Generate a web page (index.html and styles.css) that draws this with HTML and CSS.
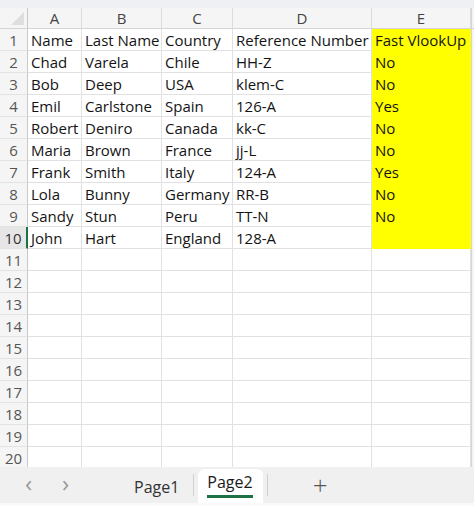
FILE: index.html
```html
<!DOCTYPE html>
<html lang="en">
<head>
    <meta charset="UTF-8">
    <meta name="viewport" content="width=device-width, initial-scale=1.0">
    <title>Fast VlookUp - Page2</title>
    <link rel="stylesheet" href="styles.css">
</head>
<body>
    <div class="app">
        <div class="top-strip"></div>

        <div class="sheet">
            <div class="grid">
                <div class="corner"><span class="corner-mark"></span></div>
                <div class="col-head">A</div>
                <div class="col-head">B</div>
                <div class="col-head">C</div>
                <div class="col-head">D</div>
                <div class="col-head">E</div>
                <div class="col-gap head"></div>

                <div class="row-head">1</div>
                <div class="cell">Name</div>
                <div class="cell">Last Name</div>
                <div class="cell">Country</div>
                <div class="cell">Reference Number</div>
                <div class="cell fill">Fast VlookUp</div>
                <div class="col-gap"></div>

                <div class="row-head">2</div>
                <div class="cell">Chad</div>
                <div class="cell">Varela</div>
                <div class="cell">Chile</div>
                <div class="cell">HH-Z</div>
                <div class="cell fill">No</div>
                <div class="col-gap"></div>

                <div class="row-head">3</div>
                <div class="cell">Bob</div>
                <div class="cell">Deep</div>
                <div class="cell">USA</div>
                <div class="cell">klem-C</div>
                <div class="cell fill">No</div>
                <div class="col-gap"></div>

                <div class="row-head">4</div>
                <div class="cell">Emil</div>
                <div class="cell">Carlstone</div>
                <div class="cell">Spain</div>
                <div class="cell">126-A</div>
                <div class="cell fill">Yes</div>
                <div class="col-gap"></div>

                <div class="row-head">5</div>
                <div class="cell">Robert</div>
                <div class="cell">Deniro</div>
                <div class="cell">Canada</div>
                <div class="cell">kk-C</div>
                <div class="cell fill">No</div>
                <div class="col-gap"></div>

                <div class="row-head">6</div>
                <div class="cell">Maria</div>
                <div class="cell">Brown</div>
                <div class="cell">France</div>
                <div class="cell">jj-L</div>
                <div class="cell fill">No</div>
                <div class="col-gap"></div>

                <div class="row-head">7</div>
                <div class="cell">Frank</div>
                <div class="cell">Smith</div>
                <div class="cell">Italy</div>
                <div class="cell">124-A</div>
                <div class="cell fill">Yes</div>
                <div class="col-gap"></div>

                <div class="row-head">8</div>
                <div class="cell">Lola</div>
                <div class="cell">Bunny</div>
                <div class="cell">Germany</div>
                <div class="cell">RR-B</div>
                <div class="cell fill">No</div>
                <div class="col-gap"></div>

                <div class="row-head">9</div>
                <div class="cell">Sandy</div>
                <div class="cell">Stun</div>
                <div class="cell">Peru</div>
                <div class="cell">TT-N</div>
                <div class="cell fill">No</div>
                <div class="col-gap"></div>

                <div class="row-head selected">10</div>
                <div class="cell">John</div>
                <div class="cell">Hart</div>
                <div class="cell">England</div>
                <div class="cell">128-A</div>
                <div class="cell fill"></div>
                <div class="col-gap"></div>
            </div>
            <div class="grid" id="emptyRows"></div>
        </div>

        <div class="tab-bar">
            <span class="nav-arrow">&#x2039;</span>
            <span class="nav-arrow">&#x203A;</span>
            <div class="tab">Page1</div>
            <span class="tab-sep"></span>
            <div class="tab active"><span class="tab-label">Page2</span></div>
            <span class="tab-sep"></span>
            <span class="add-tab">+</span>
        </div>
    </div>

    <script>
        // Empty rows 11 to 20
        const emptyRows = document.getElementById('emptyRows');
        for (let r = 11; r <= 20; r++) {
            const head = document.createElement('div');
            head.className = 'row-head';
            head.textContent = r;
            emptyRows.appendChild(head);
            for (let c = 0; c < 5; c++) {
                const cell = document.createElement('div');
                cell.className = 'cell';
                emptyRows.appendChild(cell);
            }
            const gap = document.createElement('div');
            gap.className = 'col-gap';
            emptyRows.appendChild(gap);
        }
    </script>
</body>
</html>
```

FILE: styles.css
```css
* {
    margin: 0;
    padding: 0;
    box-sizing: border-box;
}

body {
    background-color: #ffffff;
    font-family: 'Open Sans', 'Noto Sans', sans-serif;
    color: #141414;
}

.app {
    width: 474px;
    height: 506px;
    display: flex;
    flex-direction: column;
    overflow: hidden;
}

.top-strip {
    height: 8px;
    flex-shrink: 0;
    background-color: #eef0f3;
}

.sheet {
    flex: 1;
    overflow: hidden;
}

.grid {
    display: grid;
    grid-template-columns: 28px 54px 80px 71px 139px 99px 3px;
    grid-auto-rows: 22px;
}

.grid:first-child {
    grid-template-rows: 21px;
}

.corner,
.col-head {
    background-color: #f5f5f5;
    border-bottom: 1px solid #d4d4d4;
    border-right: 1px solid #dcdcdc;
}

.corner {
    position: relative;
    border-right-color: #c9c9c9;
}

.corner-mark {
    position: absolute;
    right: 3px;
    bottom: 3px;
    width: 0;
    height: 0;
    border-left: 13px solid transparent;
    border-bottom: 13px solid #dedede;
}

.col-head {
    color: #444;
    font-size: 15px;
    line-height: 21px;
    text-align: center;
}

.row-head {
    background-color: #f5f5f5;
    border-right: 1px solid #c9c9c9;
    border-bottom: 1px solid #e3e3e3;
    color: #555;
    font-size: 15px;
    line-height: 23px;
    text-align: center;
}

.row-head.selected {
    background-color: #e6e6e6;
    border-right: 2px solid #1e7145;
    color: #333;
}

.cell {
    border-right: 1px solid #e1e1e1;
    border-bottom: 1px solid #e1e1e1;
    font-size: 15px;
    line-height: 23px;
    padding-left: 3px;
    white-space: nowrap;
    overflow: hidden;
}

.cell.fill {
    background-color: #ffff00;
    border-color: #ffff00;
}

.col-gap {
    background-color: #f3f3f3;
    border-left: 1px solid #d6d6d6;
}

.col-gap.head {
    border-bottom: 1px solid #d4d4d4;
}

.tab-bar {
    height: 39px;
    flex-shrink: 0;
    background-color: #f0f0f0;
    border-bottom: 3px solid #fafafa;
    display: flex;
    align-items: flex-end;
    padding-left: 24px;
    margin-top: -2px;
    position: relative;
}

.nav-arrow {
    width: 37px;
    height: 34px;
    color: #9a9a9a;
    font-size: 24px;
    line-height: 30px;
    align-self: center;
    padding-left: 1px;
}

.tab {
    height: 34px;
    padding: 5px 14px 0;
    font-size: 16px;
    color: #333;
    line-height: 27px;
}

.tab:first-of-type {
    margin-left: 22px;
}

.tab-sep {
    width: 1px;
    height: 22px;
    background-color: #cfcfcf;
    align-self: center;
}

.tab.active {
    background-color: #ffffff;
    border-radius: 6px 6px 0 0;
    padding: 0 10px 0 9px;
    margin: 0 4px;
    height: 34px;
    color: #1a1a1a;
}

.tab-label {
    display: inline-block;
    font-weight: 500;
    line-height: 26px;
    border-bottom: 3px solid #1e7145;
}

.add-tab {
    margin-left: 45px;
    font-size: 26px;
    font-weight: 300;
    color: #555;
    line-height: 32px;
    align-self: center;
}
```
